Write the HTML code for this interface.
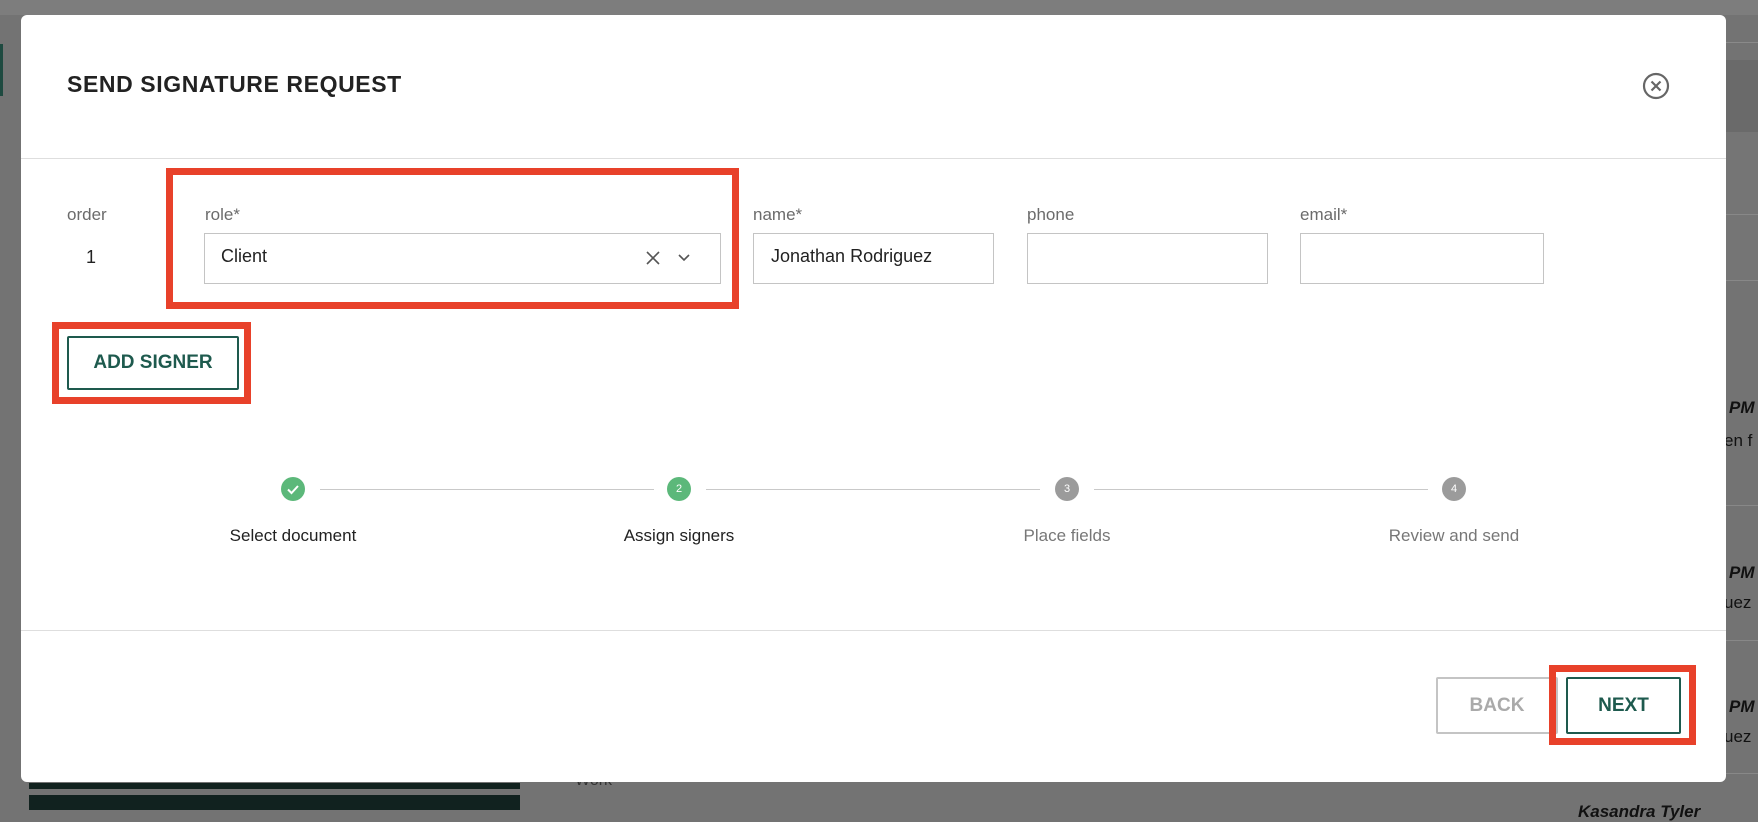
<!DOCTYPE html>
<html><head><meta charset="utf-8"><style>
*{box-sizing:border-box;margin:0;padding:0}
body{width:1758px;height:810px;overflow:hidden;background:#737373;font-family:"Liberation Sans",sans-serif;position:relative}
.a{position:absolute}
.lbl{font-size:17px;color:#6b6b6b}
.inp{position:absolute;border:1px solid #c4c4c4;background:#fff;height:51px;top:233px}
.red{position:absolute;border:7px solid #e8412a}
.circ{position:absolute;width:24px;height:24px;border-radius:50%;top:477px;color:#fff;font-size:11px;text-align:center;line-height:24px}
.line{position:absolute;height:1px;background:#c9c9c9;top:489px}
.step{position:absolute;top:526px;font-size:17px;width:300px;text-align:center}
</style></head><body>
<div class="a" style="left:0;top:0;width:1758px;height:15px;background:#7d7d7d"></div>
<div class="a" style="left:0;top:44px;width:3px;height:52px;background:#1e4a40"></div>
<div class="a" style="left:1726px;top:42px;width:32px;height:1px;background:#8a8a8a"></div>
<div class="a" style="left:1726px;top:60px;width:32px;height:72px;background:#6a6a6a"></div>
<div class="a" style="left:1726px;top:132px;width:32px;height:148px;background:#757575"></div>
<div class="a" style="left:1726px;top:214px;width:32px;height:1px;background:#888"></div>
<div class="a" style="left:1726px;top:280px;width:32px;height:1px;background:#888"></div>
<div class="a" style="left:1726px;top:505px;width:32px;height:1px;background:#888"></div>
<div class="a" style="left:1726px;top:640px;width:32px;height:1px;background:#888"></div>
<div class="a" style="left:1726px;top:773px;width:32px;height:1px;background:#888"></div>
<div class="a" style="left:1729px;top:398px;font:italic bold 17px 'Liberation Sans';color:#111">PM</div>
<div class="a" style="left:1724px;top:431px;font-size:17px;color:#111">en f</div>
<div class="a" style="left:1729px;top:563px;font:italic bold 17px 'Liberation Sans';color:#111">PM</div>
<div class="a" style="left:1724px;top:593px;font-size:17px;color:#111">uez</div>
<div class="a" style="left:1729px;top:697px;font:italic bold 17px 'Liberation Sans';color:#111">PM</div>
<div class="a" style="left:1724px;top:727px;font-size:17px;color:#111">uez</div>
<div class="a" style="left:1578px;top:802px;font:italic bold 17px 'Liberation Sans';color:#111">Kasandra Tyler</div>
<div class="a" style="left:29px;top:783px;width:491px;height:6px;background:#11221f"></div>
<div class="a" style="left:29px;top:795px;width:491px;height:15px;background:#11221f"></div>
<div class="a" style="left:575px;top:772px;font-size:16px;color:#333">Work</div>

<div class="a" style="left:21px;top:15px;width:1705px;height:767px;background:#fff;border-radius:6px"></div>
<div class="a" style="left:67px;top:71px;font-weight:bold;font-size:23px;letter-spacing:0.6px;color:#222">SEND SIGNATURE REQUEST</div>
<svg class="a" style="left:1642px;top:72px" width="28" height="28" viewBox="0 0 28 28"><circle cx="14" cy="14" r="12" fill="none" stroke="#666" stroke-width="2.2"/><path d="M9.5 9.5L18.5 18.5M18.5 9.5L9.5 18.5" stroke="#666" stroke-width="2.2"/></svg>
<div class="a" style="left:21px;top:158px;width:1705px;height:1px;background:#dedede"></div>

<div class="a lbl" style="left:67px;top:205px">order</div>
<div class="a lbl" style="left:205px;top:205px">role*</div>
<div class="a lbl" style="left:753px;top:205px">name*</div>
<div class="a lbl" style="left:1027px;top:205px">phone</div>
<div class="a lbl" style="left:1300px;top:205px">email*</div>
<div class="a" style="left:86px;top:247px;font-size:18px;color:#222">1</div>
<div class="inp" style="left:204px;width:517px"></div>
<div class="a" style="left:221px;top:246px;font-size:18px;color:#222">Client</div>
<svg class="a" style="left:645px;top:250px" width="16" height="16"><path d="M2 2L14 14M14 2L2 14" stroke="#555" stroke-width="1.6"/></svg>
<svg class="a" style="left:677px;top:252px" width="14" height="12"><path d="M2 3L7 8L12 3" fill="none" stroke="#555" stroke-width="1.6"/></svg>
<div class="inp" style="left:753px;width:241px"></div>
<div class="a" style="left:771px;top:246px;font-size:18px;color:#222">Jonathan Rodriguez</div>
<div class="inp" style="left:1027px;width:241px"></div>
<div class="inp" style="left:1300px;width:244px"></div>
<div class="red" style="left:166px;top:168px;width:573px;height:141px"></div>

<div class="red" style="left:52px;top:322px;width:199px;height:82px"></div>
<div class="a" style="left:67px;top:336px;width:172px;height:54px;border:2px solid #1e5a4e;border-radius:2px;color:#1e5a4e;font-weight:bold;font-size:19px;text-align:center;line-height:50px">ADD SIGNER</div>

<div class="line" style="left:320px;width:334px"></div>
<div class="line" style="left:706px;width:334px"></div>
<div class="line" style="left:1094px;width:334px"></div>
<div class="circ" style="left:281px;background:#5cb87a"><svg width="24" height="24"><path d="M7 12.5L10.5 16L17 9" fill="none" stroke="#fff" stroke-width="2"/></svg></div>
<div class="circ" style="left:667px;background:#5cb87a">2</div>
<div class="circ" style="left:1055px;background:#9b9b9b">3</div>
<div class="circ" style="left:1442px;background:#9b9b9b">4</div>
<div class="step" style="left:143px;color:#222">Select document</div>
<div class="step" style="left:529px;color:#222">Assign signers</div>
<div class="step" style="left:917px;color:#777">Place fields</div>
<div class="step" style="left:1304px;color:#777">Review and send</div>

<div class="a" style="left:21px;top:630px;width:1705px;height:1px;background:#dedede"></div>
<div class="a" style="left:1436px;top:677px;width:122px;height:57px;border:2px solid #c4c4c4;border-radius:2px;color:#aaa;font-weight:bold;font-size:19px;text-align:center;line-height:53px">BACK</div>
<div class="red" style="left:1549px;top:665px;width:147px;height:80px"></div>
<div class="a" style="left:1566px;top:677px;width:115px;height:57px;border:2px solid #1e5a4e;border-radius:2px;background:#fff;color:#1e5a4e;font-weight:bold;font-size:19px;text-align:center;line-height:53px">NEXT</div>
</body></html>
